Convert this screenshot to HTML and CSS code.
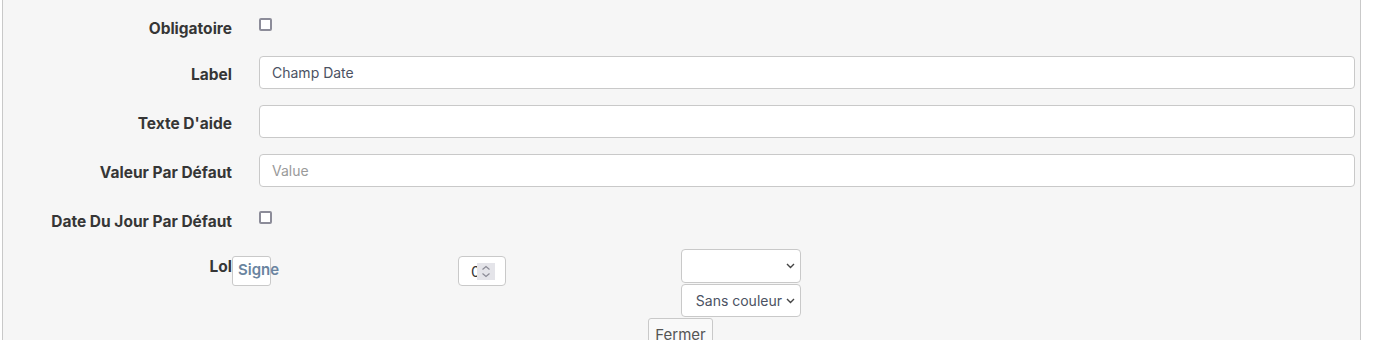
FILE: index.html
```html
<!DOCTYPE html>
<html lang="fr">
<head>
    <meta charset="UTF-8">
    <meta name="viewport" content="width=device-width, initial-scale=1.0">
    <title>Champ Date</title>
    <link rel="stylesheet" href="styles.css">
</head>
<body>
    <div class="panel">
        <div class="row check-row first">
            <label class="label">Obligatoire</label>
            <div class="field"><span class="checkbox"></span></div>
        </div>

        <div class="row">
            <label class="label">Label</label>
            <div class="field"><div class="input">Champ Date</div></div>
        </div>

        <div class="row">
            <label class="label">Texte D'aide</label>
            <div class="field"><div class="input"></div></div>
        </div>

        <div class="row">
            <label class="label">Valeur Par Défaut</label>
            <div class="field"><div class="input placeholder">Value</div></div>
        </div>

        <div class="row check-row">
            <label class="label">Date Du Jour Par Défaut</label>
            <div class="field"><span class="checkbox"></span></div>
        </div>

        <div class="lol-row">
            <label class="label lol-label">Lol</label>
            <div class="cell cell-sign">
                <div class="sign-box">Signe</div>
            </div>
            <div class="cell cell-num">
                <div class="num-box">
                    <span class="num-value">0</span>
                    <span class="spinner">
                        <svg width="18" height="17" viewBox="0 0 18 17">
                            <path d="M5.5 6.5 L9 3.5 L12.5 6.5" fill="none" stroke="#8a8a95" stroke-width="1.2"/>
                            <path d="M5.5 10.5 L9 13.5 L12.5 10.5" fill="none" stroke="#8a8a95" stroke-width="1.2"/>
                        </svg>
                    </span>
                </div>
            </div>
            <div class="cell cell-selects">
                <div class="select">
                    <span class="select-text"></span>
                    <svg class="chevron" width="9" height="6" viewBox="0 0 9 6"><path d="M1 1 L4.5 4.5 L8 1" fill="none" stroke="#444" stroke-width="1.4"/></svg>
                </div>
                <div class="select">
                    <span class="select-text">Sans couleur</span>
                    <svg class="chevron" width="9" height="6" viewBox="0 0 9 6"><path d="M1 1 L4.5 4.5 L8 1" fill="none" stroke="#444" stroke-width="1.4"/></svg>
                </div>
            </div>
        </div>

        <div class="actions">
            <button class="btn">Fermer</button>
        </div>
    </div>
</body>
</html>
```

FILE: styles.css
```css
:root {
    --panel-bg: #f6f6f6;
    --border: #c9c9c9;
    --label: #363636;
    --text: #4b5263;
}

body {
    margin: 0;
    font-family: 'Inter', 'Noto Sans', sans-serif;
    background: #fff;
    height: 340px;
    overflow: hidden;
}

.panel {
    margin-left: 2px;
    width: 1359px;
    height: 340px;
    box-sizing: border-box;
    background: var(--panel-bg);
    border-left: 1px solid var(--border);
    border-right: 1px solid var(--border);
    padding: 10px 5px 0 0;
    overflow: hidden;
}

.row {
    display: grid;
    grid-template-columns: 229px 1fr;
    column-gap: 27px;
    margin-bottom: 16px;
}

.row.first {
    margin-bottom: 13px;
}

.label {
    text-align: right;
    font-size: 15.5px;
    font-weight: 700;
    line-height: 20px;
    padding-top: 9px;
    color: var(--label);
}

.check-row {
    height: 33px;
}

.check-row + .lol-row {
    margin-top: -3px;
}

.checkbox {
    display: block;
    width: 13px;
    height: 13px;
    box-sizing: border-box;
    margin-top: 8px;
    border: 2px solid #8c8c99;
    border-radius: 2px;
    background: #fff;
}

.input {
    height: 33px;
    box-sizing: border-box;
    background: #fff;
    border: 1px solid var(--border);
    border-radius: 4px;
    padding: 0 12px;
    font-size: 14px;
    line-height: 31px;
    color: var(--text);
}

.input.placeholder {
    color: #9a9a9a;
}

/* Ligne Lol */
.lol-row {
    display: flex;
    align-items: flex-start;
}

.lol-label {
    width: 229px;
    padding-top: 8px;
}

.cell {
    padding-top: 7px;
}

.cell-sign {
    width: 226px;
}

.cell-num {
    width: 223px;
}

.cell-selects {
    padding-top: 0;
    width: 120px;
}

.sign-box {
    width: 39px;
    height: 30px;
    box-sizing: border-box;
    background: #fff;
    border: 1px solid var(--border);
    border-radius: 3px;
    padding-left: 5px;
    font-size: 15px;
    font-weight: 600;
    line-height: 26px;
    color: #6a84a0;
    white-space: nowrap;
}

.num-box {
    width: 48px;
    height: 30px;
    box-sizing: border-box;
    background: #fff;
    border: 1px solid var(--border);
    border-radius: 4px;
    padding-left: 12px;
    display: flex;
    align-items: center;
}

.num-value {
    width: 6px;
    overflow: hidden;
    font-size: 15px;
    color: #333;
}

.spinner {
    display: flex;
    width: 18px;
    height: 17px;
    background: #e4e4e9;
}

.select {
    width: 120px;
    height: 34px;
    box-sizing: border-box;
    background: #fff;
    border: 1px solid var(--border);
    border-radius: 4px;
    display: flex;
    align-items: center;
    justify-content: flex-end;
    padding-right: 5px;
    gap: 4px;
}

.select + .select {
    margin-top: 1px;
    height: 33px;
}

.select-text {
    font-size: 14px;
    color: var(--text);
}

.actions {
    display: flex;
    padding-left: 645px;
    margin-top: 1px;
}

.btn {
    font-family: 'Inter', 'Noto Sans', sans-serif;
    font-size: 15px;
    color: #555;
    background: #f9f9f9;
    border: 1px solid var(--border);
    border-radius: 3px;
    padding: 2px 6px 0;
    height: 30px;
    width: 65px;
    text-align: center;
}
```
